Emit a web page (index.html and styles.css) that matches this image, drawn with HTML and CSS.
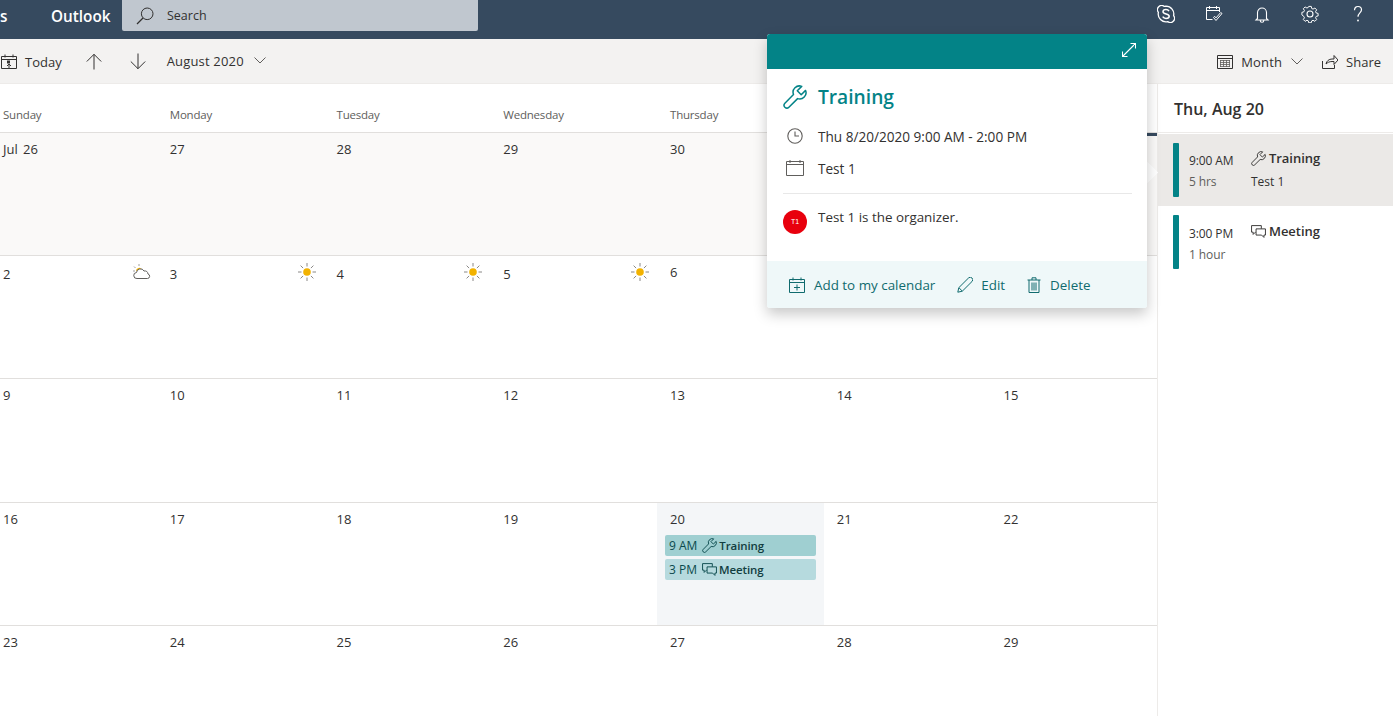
FILE: index.html
```html
<!DOCTYPE html>
<html lang="en">
<head>
<meta charset="utf-8">
<title>Outlook Calendar</title>
<link rel="stylesheet" href="styles.css">
</head>
<body>
<svg class="defs" width="0" height="0" aria-hidden="true">
  <defs>
    <symbol id="wrench" viewBox="0 0 24 24"><path d="M22.6 5.4l-4.4 4.3-3.9-3.9 4.4-4.4a6.3 6.3 0 0 0-8.2 8.1L1.9 18.2a2.9 2.9 0 0 0 0 4 2.9 2.9 0 0 0 4 0l8.7-8.6a6.3 6.3 0 0 0 8-8.2z" fill="none" stroke="currentColor" stroke-width="1.5" stroke-linejoin="round"/></symbol>
    <symbol id="chat" viewBox="0 0 16 14"><path d="M11 4V.7H.6v7h1.700v2.400l2.400-2.400H5M5.400 4.200h10v6.600h-1.600v2.500l-2.500-2.500H5.400z" fill="none" stroke="currentColor" stroke-width="1"/></symbol>
    <symbol id="sun" viewBox="0 0 18 18"><g stroke="#8a8886" stroke-width="1"><path d="M9 0v3.500M9 14.500V18M0 9h3.500M14.500 9H18M2.600 2.600l2.500 2.500M12.900 12.900l2.500 2.500M2.600 15.400l2.500-2.500M12.900 5.100l2.500-2.500"/></g><circle cx="9" cy="9" r="3.800" fill="#f2b200"/></symbol>
  </defs>
</svg>

<header class="topbar">
  <span class="waffle-tail">s</span>
  <span class="brand">Outlook</span>
  <div class="search">
    <svg class="search-icon" viewBox="0 0 18 18"><circle cx="11.200" cy="6.800" r="5.800" fill="none" stroke="#323130" stroke-width="1"/><path d="M7 11 1 17" stroke="#323130" stroke-width="1.200"/></svg>
    <span>Search</span>
  </div>
  <nav class="top-icons">
    <svg class="ticon" viewBox="0 0 18 18"><path d="M9 1.200a7.800 7.800 0 0 1 7.600 9.500 4.200 4.200 0 0 1-5.900 5.900A7.800 7.800 0 0 1 1.400 7.300a4.200 4.200 0 0 1 5.900-5.900A8 8 0 0 1 9 1.200z" fill="none" stroke="#fff" stroke-width="1.300"/><path d="M12 6.200C11.300 5 10.200 4.600 9 4.600c-1.700 0-3 .8-3 2.200 0 3 6.200 1.600 6.200 4.400 0 1.400-1.400 2.200-3.200 2.200-1.400 0-2.600-.5-3.300-1.700" fill="none" stroke="#fff" stroke-width="1.500"/></svg>
    <svg class="ticon" viewBox="0 0 18 18"><path d="M7.500 14.500H1.500V2.500h13V7M1.500 5.500h13M4.500 1v3M11.500 1v3" fill="none" stroke="#fff" stroke-width="1"/><path d="M8.500 12.500l2.500 3 6-7-1.300-1-4.700 5.400-1.400-1.600z" fill="none" stroke="#fff" stroke-width="1"/></svg>
    <svg class="ticon" viewBox="0 0 18 18"><path d="M4.500 13.500V7.500a4.500 4.500 0 0 1 9 0v6l1.500 1.500H3zM7.200 15.500a1.800 1.800 0 0 0 3.600 0" fill="none" stroke="#fff" stroke-width="1.100"/></svg>
    <svg class="ticon" viewBox="0 0 18 18"><path d="M7.600 1h2.800l.5 2.300 1.500.7 2-1.200 2 2-1.200 2 .7 1.500 2.100.5v2.800l-2.100.5-.7 1.500 1.200 2-2 2-2-1.200-1.500.7-.5 2.100H7.600l-.5-2.100-1.500-.7-2 1.200-2-2 1.200-2-.7-1.500L0 10.400V7.600l2.100-.5.700-1.500-1.200-2 2-2 2 1.200 1.500-.7z" transform="translate(.9 .5) scale(.9)" fill="none" stroke="#fff" stroke-width="1.100"/><circle cx="9" cy="9" r="3" fill="none" stroke="#fff" stroke-width="1.100"/></svg>
    <svg class="ticon" viewBox="0 0 18 18"><path d="M5.500 5.200C5.500 3 7 1.500 9 1.500s3.500 1.400 3.500 3.300c0 3-3.500 3.400-3.500 7" fill="none" stroke="#fff" stroke-width="1.200"/><circle cx="9" cy="15.500" r=".9" fill="#fff"/></svg>
  </nav>
</header>

<div class="toolbar">
  <div class="tool-left">
    <button class="tbtn today">
      <svg class="icon16" viewBox="0 0 16 16"><path d="M.5 2.500h15v12H.5zM.5 5.500h15M4 .5v3M12 .5v3" fill="none" stroke="#323130"/><rect x="6" y="6.500" width="3" height="3" fill="#323130"/><path d="M8 14V10.500M6 12l2-2 2 2" fill="none" stroke="#323130"/></svg>
      <span>Today</span>
    </button>
    <button class="arrow"><svg viewBox="0 0 16 16"><path d="M8 16V.8M.8 8 8 .8 15.200 8" fill="none" stroke="#323130" stroke-width="1"/></svg></button>
    <button class="arrow"><svg viewBox="0 0 16 16"><path d="M8 0v15.200M.8 8 8 15.200 15.200 8" fill="none" stroke="#323130" stroke-width="1"/></svg></button>
    <button class="tbtn month-nav">
      <span>August 2020</span>
      <svg class="chev" viewBox="0 0 12 7"><path d="M.5.500 6 6l5.500-5.500" fill="none" stroke="#605e5c"/></svg>
    </button>
  </div>
  <div class="tool-right">
    <button class="tbtn month-view">
      <svg class="icon16" viewBox="0 0 16 16"><path d="M.5 1.500h15v13H.5zM.5 4.500h15" fill="none" stroke="#323130"/><path d="M3 6.500h10M3 8.500h10M3 10.500h10M3 12.500h10M3.500 6v7M6.500 6v7M9.500 6v7M12.500 6v7" stroke="#605e5c" stroke-width=".8" fill="none"/></svg>
      <span>Month</span>
      <svg class="chev" viewBox="0 0 12 7"><path d="M.5.500 6 6l5.500-5.500" fill="none" stroke="#605e5c"/></svg>
    </button>
    <button class="tbtn share">
      <svg class="icon16" viewBox="0 0 16 16"><path d="M.5 7v7.500h12V11M4 10c.5-3 3-5 6-5h2V1.500L16 6l-4 4.500V7.500h-2c-2.500 0-4.500 1-6 2.500z" fill="none" stroke="#323130"/></svg>
      <span>Share</span>
    </button>
  </div>
</div>

<main class="main">
  <section class="calendar">
    <div class="weekdays">
      <div>Sunday</div><div>Monday</div><div>Tuesday</div><div>Wednesday</div><div>Thursday</div><div></div><div></div>
    </div>
    <div class="weeks">
      <div class="cell past jul">Jul 26</div><div class="cell past">27</div><div class="cell past">28</div><div class="cell past">29</div><div class="cell past">30</div><div class="cell past"></div><div class="cell past"></div>

      <div class="cell w"><span>2</span><svg class="weather cloud" viewBox="0 0 18 16"><g stroke="#8a8886" stroke-width=".8"><path d="M6 0v2M1 2.500l1.500 1.500M0 7h2"/></g><path d="M3 7a3.200 3.200 0 0 1 6-1.500z" fill="#f2b200"/><path d="M4 14.500a3 3 0 0 1-.5-6 4 4 0 0 1 7.500-1.500 3.500 3.500 0 0 1 4 3 2.300 2.300 0 0 1-.5 4.500z" fill="#fff" stroke="#605e5c"/></svg></div>
      <div class="cell w"><span>3</span><svg class="weather"><use href="#sun"/></svg></div>
      <div class="cell w"><span>4</span><svg class="weather"><use href="#sun"/></svg></div>
      <div class="cell w"><span>5</span><svg class="weather"><use href="#sun"/></svg></div>
      <div class="cell">6</div><div class="cell"></div><div class="cell"></div>

      <div class="cell">9</div><div class="cell">10</div><div class="cell">11</div><div class="cell">12</div><div class="cell">13</div><div class="cell">14</div><div class="cell">15</div>

      <div class="cell">16</div><div class="cell">17</div><div class="cell">18</div><div class="cell">19</div>
      <div class="cell today-cell">20
        <div class="ev ev-a"><span>9 AM</span><svg class="ev-i"><use href="#wrench"/></svg><b>Training</b></div>
        <div class="ev ev-b"><span>3 PM</span><svg class="ev-i"><use href="#chat"/></svg><b>Meeting</b></div>
      </div>
      <div class="cell">21</div><div class="cell">22</div>

      <div class="cell">23</div><div class="cell">24</div><div class="cell">25</div><div class="cell">26</div><div class="cell">27</div><div class="cell">28</div><div class="cell">29</div>
    </div>
  </section>

  <aside class="agenda">
    <h2>Thu, Aug 20</h2>
    <div class="ag-item selected">
      <i class="ag-bar"></i>
      <div class="ag-time"><div>9:00 AM</div><small>5 hrs</small></div>
      <div class="ag-info"><div class="ag-title"><svg class="ag-i"><use href="#wrench"/></svg><b>Training</b></div><small>Test 1</small></div>
    </div>
    <div class="ag-item second">
      <i class="ag-bar"></i>
      <div class="ag-time"><div>3:00 PM</div><small>1 hour</small></div>
      <div class="ag-info"><div class="ag-title"><svg class="ag-i"><use href="#chat"/></svg><b>Meeting</b></div></div>
    </div>
  </aside>
</main>

<div class="strip"></div>
<article class="popup">
  <div class="pop-head">
    <svg class="expand" viewBox="0 0 14 14"><path d="M8.500.5h5v5M13.500.5.500 13.500M.5 8.500v5h5" fill="none" stroke="#fff" stroke-width="1.100"/></svg>
  </div>
  <div class="pop-body">
    <div class="pop-title"><svg class="pop-wrench"><use href="#wrench"/></svg><h1>Training</h1></div>
    <div class="pop-row"><svg class="pop-i" viewBox="0 0 16 16"><circle cx="8" cy="8" r="7.200" fill="none" stroke="#605e5c" stroke-width="1.100"/><path d="M8 3.500V8h4" fill="none" stroke="#605e5c" stroke-width="1.100"/></svg><span>Thu 8/20/2020 9:00 AM - 2:00 PM</span></div>
    <div class="pop-row"><svg class="pop-i cal" viewBox="0 0 18 16"><path d="M.5 1.500h17v14H.5zM.5 4.500h17M4 0v3M14 0v3" fill="none" stroke="#605e5c"/></svg><span>Test 1</span></div>
    <hr>
    <div class="organizer"><span class="avatar">T1</span><span>Test 1 is the organizer.</span></div>
  </div>
  <div class="pop-foot">
    <button class="act add"><svg viewBox="0 0 16 16"><path d="M.5 2.500h15v13H.5zM.5 5.500h15M4 .5v3M12 .5v3M8 7.500v6M5 10.500h6" fill="none" stroke="#106b6e"/></svg><span>Add to my calendar</span></button>
    <button class="act edit"><svg viewBox="0 0 16 16"><path d="M.8 15.200l1-4.500L11.500 1a1.800 1.800 0 0 1 3.500 3.500L5.300 14.200zM2 10.800l3.200 3.200" fill="none" stroke="#106b6e"/></svg><span>Edit</span></button>
    <button class="act del"><svg viewBox="0 0 14 16"><path d="M.5 3h13M2 3v12.500h10V3M5 3V.8h4V3M5 5.500v8M7 5.500v8M9 5.500v8" fill="none" stroke="#106b6e"/></svg><span>Delete</span></button>
  </div>
</article>
<span class="beak"></span>
</body>
</html>
```

FILE: styles.css
```css
* { box-sizing: border-box; }
html, body { margin: 0; height: 716px; overflow: hidden; }
body {
  font-family: "Open Sans", "Noto Sans", sans-serif;
  font-size: 13px;
  color: #323130;
  background: #fff;
  position: relative;
}
button { font: inherit; color: inherit; background: none; border: 0; padding: 0; display: flex; align-items: center; }
small { font-size: 12px; }
.defs { position: absolute; }

.topbar { height: 39px; background: #364a5f; display: flex; align-items: flex-start; color: #fff; }
.waffle-tail { font-weight: 600; font-size: 15.3px; width: 51px; line-height: 32px; }
.brand { font-weight: 600; font-size: 15.3px; width: 71px; line-height: 32px; }
.search { width: 356px; height: 31px; background: #c0c7cf; border-radius: 0 0 2px 2px; display: flex; align-items: center; padding-left: 14px; gap: 13px; color: #323130; font-size: 12.5px; }
.search-icon { width: 18px; height: 18px; }
.top-icons { margin-left: auto; display: flex; gap: 30px; padding: 5px 26px 0 0; }
.ticon { width: 18px; height: 18px; }

.toolbar { height: 45px; background: #f3f2f1; border-bottom: 1px solid #edebe9; display: flex; justify-content: space-between; align-items: center; padding-top: 1px; }
.tool-left, .tool-right { display: flex; align-items: center; }
.tbtn { gap: 8px; }
.icon16 { width: 16px; height: 16px; flex: none; }
.today { margin-left: 1px; }
.arrow { width: 16px; height: 17px; margin-left: 24px; }
.arrow svg { width: 16px; height: 17px; }
.today + .arrow { margin-left: 24px; }
.arrow + .arrow { margin-left: 28px; }
.month-nav { margin-left: 21px; gap: 10px; letter-spacing: .18px; padding-bottom: 2px; }
.month-view { letter-spacing: .15px; }
.month-view .chev { margin-left: 1px; }
.chev { width: 12px; height: 7px; }
.tool-right { padding-right: 12px; gap: 19px; }

.main { display: flex; height: 632px; }
.calendar { width: 1158px; flex: none; overflow: hidden; border-right: 1px solid #edebe9; }
.weekdays { display: grid; grid-template-columns: repeat(7, 166.75px); margin-left: -10px; height: 49px; padding-top: 23px; border-bottom: 1px solid #e1dfdd; font-size: 11.5px; letter-spacing: -.2px; color: #605e5c; }
.weekdays div { padding-left: 13px; }
.weeks { display: grid; grid-template-columns: repeat(7, 166.75px); grid-auto-rows: 123.2px; margin-left: -10px; }
.cell { padding: 7px 0 0 13px; border-bottom: 1px solid #e1dfdd; position: relative; font-size: 13px; line-height: 18px; }
.cell.w { padding-top: 9px; }
.jul { word-spacing: 2px; }
.past { background: #faf9f8; }
.today-cell { background: #f4f6f8; }
.weather { position: absolute; right: 8px; top: 7px; width: 18px; height: 18px; }
.weather.cloud { height: 16px; right: 6px; top: 8px; }

.ev { height: 21px; margin: 3px 0 0 -5px; width: 151px; border-radius: 2px; display: flex; align-items: center; padding: 1px 0 0 4px; font-size: 12px; color: #0b4a4d; }
.today-cell .ev:first-of-type { margin-top: 7px; }
.ev-a { background: #9fcfd1; }
.ev-b { background: #b6dade; }
.ev-i { width: 15px; height: 15px; margin: -1px 2px 0 5px; }
.ev b { font-weight: 600; color: #123d40; font-size: 11.5px; letter-spacing: -.1px; }

.agenda { flex: 1; min-width: 0; }
.agenda h2 { margin: 0 0 1px; height: 49px; padding: 14px 0 0 16px; font-size: 16px; font-weight: 600; line-height: 22px; border-bottom: 1px solid #edebe9; }
.ag-item { height: 72px; padding: 9px 0 0 15px; display: flex; position: relative; }
.selected { background: #ebe9e7; }
.ag-bar { width: 6px; height: 54px; background: #038387; border-radius: 1px; flex: none; }
.ag-time { width: 62px; margin-left: 10px; padding-top: 7px; font-size: 12px; line-height: 21px; letter-spacing: -.1px; }
.ag-time small { color: #605e5c; display: block; font-size: 12px; }
.second .ag-time { padding-top: 8px; }
.ag-info { padding-top: 5px; font-size: 12px; }
.second .ag-info { padding-top: 6px; }
.ag-title { display: flex; align-items: center; font-size: 13px; height: 20px; }
.ag-title b { font-weight: 600; letter-spacing: -.05px; }
.ag-i { width: 15px; height: 15px; margin-right: 3px; }
.ag-info small { display: block; margin-top: 5px; }

.strip { position: absolute; left: 1147px; top: 133px; width: 10px; height: 3px; background: #364a5f; }
.popup { position: absolute; left: 767px; top: 34px; width: 380px; height: 274px; background: #fff; border-radius: 3px; box-shadow: 0 6px 14px rgba(0,0,0,.22); display: flex; flex-direction: column; z-index: 2; }
.pop-head { height: 35px; background: #038387; border-radius: 3px 3px 0 0; display: flex; justify-content: flex-end; align-items: center; padding: 0 11px 3px 0; }
.expand { width: 14px; height: 14px; }
.pop-body { flex: 1; padding: 15px 15px 0 16px; }
.pop-title { display: flex; align-items: center; gap: 11px; height: 26px; }
.pop-wrench { width: 24px; height: 24px; color: #038387; }
.pop-title h1 { margin: 0; font-size: 19.2px; font-weight: 600; color: #038387; line-height: 26px; }
.pop-row { display: flex; align-items: center; height: 20px; margin-top: 12px; font-size: 13.6px; }
.pop-title + .pop-row { margin-top: 16px; }
.pop-i { width: 16px; height: 16px; margin: 0 15px 0 4px; }
.pop-i.cal { width: 18px; margin: 0 14px 0 3px; }
hr { border: 0; border-top: 1px solid #e8e8e8; margin: 15px 0 0 0; }
.organizer { display: flex; gap: 11px; margin-top: 13px; font-size: 13.4px; line-height: 20px; }
.avatar { width: 24px; height: 24px; border-radius: 50%; background: #e8000d; color: #fff; font-size: 7px; font-family: "Liberation Sans", sans-serif; display: flex; align-items: center; justify-content: center; flex: none; margin-top: 3px; }
.pop-foot { height: 47px; background: #eff8f9; border-radius: 0 0 3px 3px; display: flex; align-items: center; padding-left: 22px; color: #106b6e; font-size: 13.4px; }
.act { gap: 9px; }
.act svg { width: 16px; height: 16px; }
.edit { margin-left: 22px; gap: 8px; }
.del { margin-left: 22px; }
.del svg { width: 14px; }
.beak { position: absolute; left: 1140px; top: 164.5px; width: 15px; height: 15px; background: #fff; transform: rotate(45deg); z-index: 1; }
```
